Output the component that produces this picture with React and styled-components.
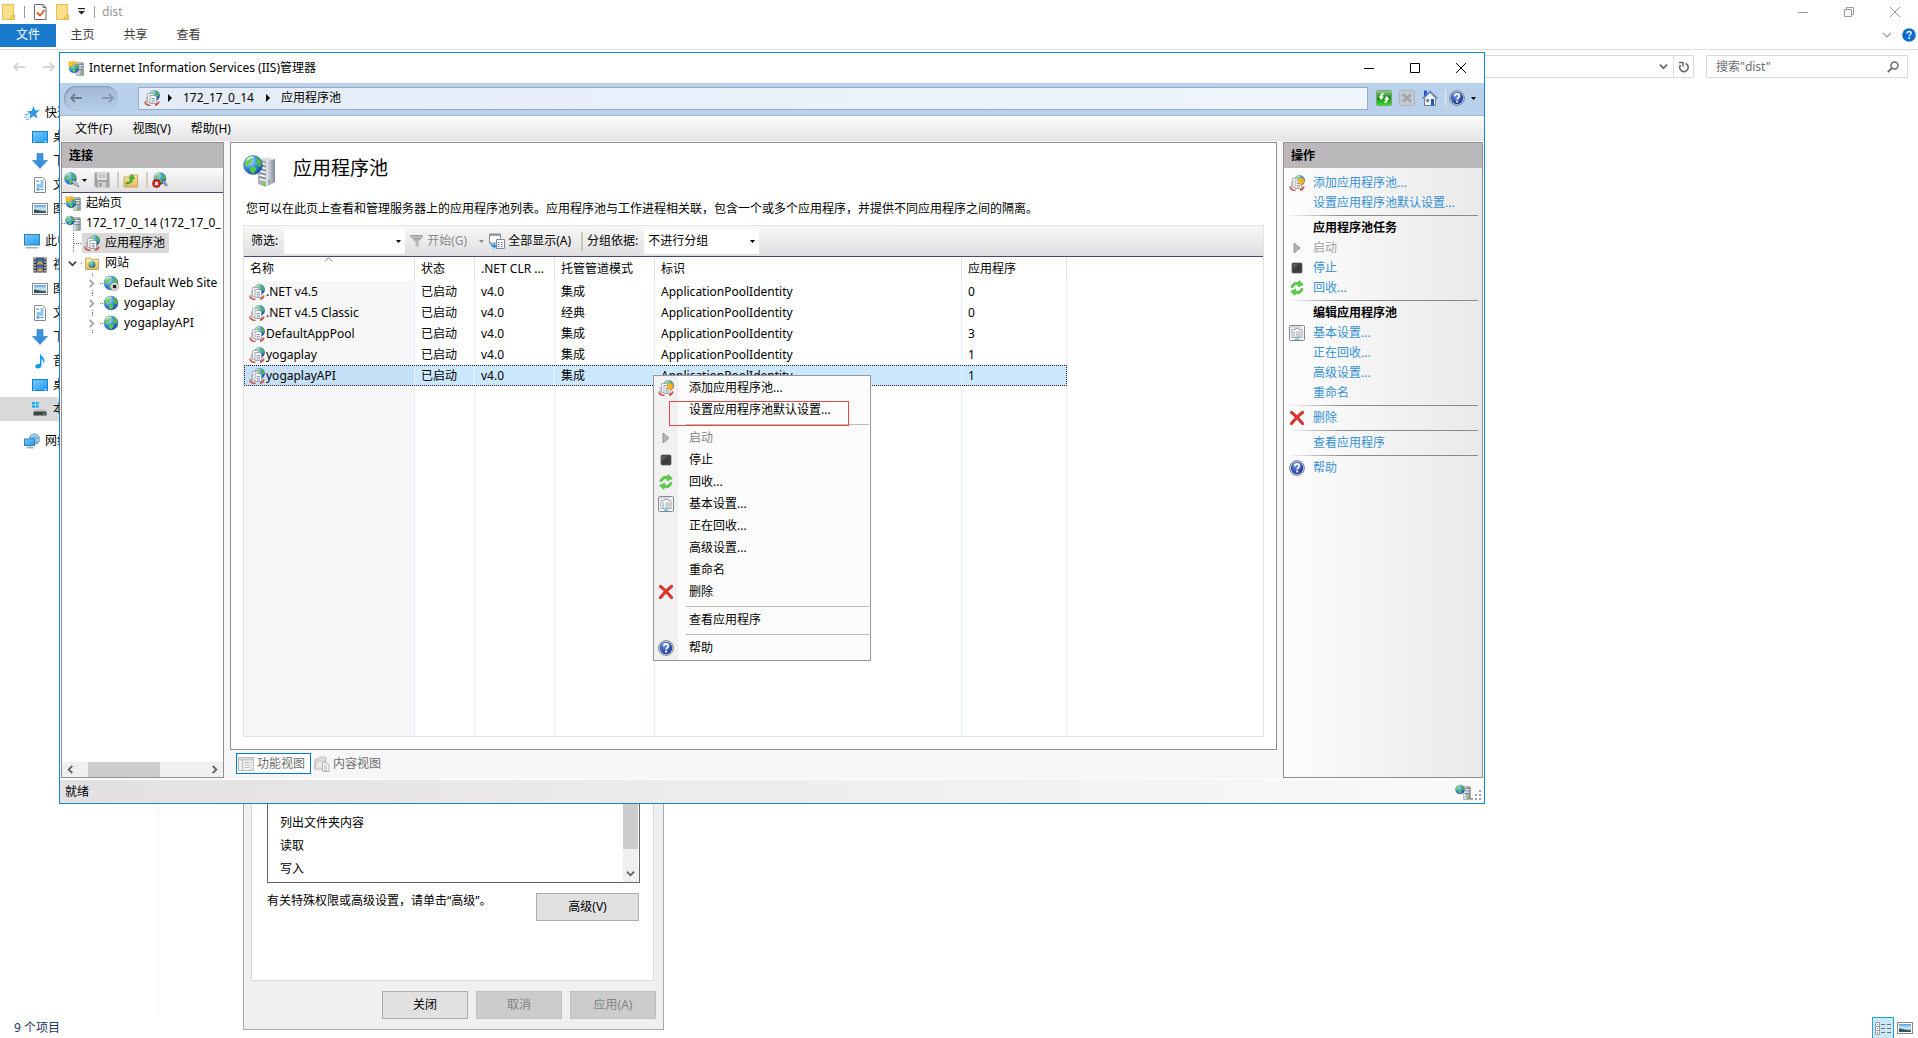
import React from 'react';
import styled, { createGlobalStyle } from 'styled-components';

const GlobalStyle = createGlobalStyle`
  * {
    box-sizing: border-box;
  }
  body {
    margin: 0;
    background: #fff;
    color: #000;
    font-family: 'Noto Sans', 'Noto Sans CJK SC', sans-serif;
    font-size: 12px;
    line-height: 16px;
  }
  button, input, select {
    font: inherit;
    color: inherit;
    margin: 0;
    padding: 0;
    border: 0;
    background: none;
    border-radius: 0;
  }
  a {
    color: inherit;
    text-decoration: none;
  }
  svg {
    display: block;
    flex: none;
  }
  h1, h2, h3, p, ul {
    margin: 0;
    padding: 0;
    list-style: none;
    font-size: inherit;
  }
`;

/* ---------- icons ---------- */

const HiddenSvg = styled.svg`
  position: absolute;
`;

const Defs = () => (
  <HiddenSvg width="0" height="0" aria-hidden="true">
    <defs>
      <radialGradient id="sea" cx="35%" cy="30%" r="75%">
        <stop offset="0" stopColor="#b5e0ff" />
        <stop offset="0.5" stopColor="#3f8fe3" />
        <stop offset="1" stopColor="#15429c" />
      </radialGradient>
      <linearGradient id="tower" x1="0" x2="1" y1="0" y2="0">
        <stop offset="0" stopColor="#e4e9ee" />
        <stop offset="0.5" stopColor="#b4bcc6" />
        <stop offset="1" stopColor="#7d8894" />
      </linearGradient>
      <linearGradient id="screen" x1="0" x2="1" y1="0" y2="1">
        <stop offset="0" stopColor="#7cc8fa" />
        <stop offset="1" stopColor="#1f9df0" />
      </linearGradient>
      <linearGradient id="gold" x1="0" x2="0" y1="0" y2="1">
        <stop offset="0" stopColor="#fbe7a4" />
        <stop offset="1" stopColor="#e3b95c" />
      </linearGradient>
      <radialGradient id="navy" cx="40%" cy="30%" r="75%">
        <stop offset="0" stopColor="#6f93e6" />
        <stop offset="1" stopColor="#122f93" />
      </radialGradient>
      <linearGradient id="green" x1="0" x2="0" y1="0" y2="1">
        <stop offset="0" stopColor="#9ad096" />
        <stop offset="0.5" stopColor="#128a12" />
        <stop offset="1" stopColor="#3fe22c" />
      </linearGradient>
      <linearGradient id="photo" x1="0" x2="0" y1="0" y2="1">
        <stop offset="0" stopColor="#5a9be0" />
        <stop offset="0.5" stopColor="#d6ebfa" />
        <stop offset="1" stopColor="#3a6d86" />
      </linearGradient>
    </defs>
  </HiddenSvg>
);

const Icon = ({ size = 16, children }) => (
  <svg width={size} height={size} viewBox="0 0 16 16" fill="none" aria-hidden="true">
    {children}
  </svg>
);

const GlobeShape = ({ cx = 8, cy = 8, r = 7 }) => (
  <g transform={`translate(${cx} ${cy}) scale(${r / 7})`}>
    <circle r="7" fill="url(#sea)" stroke="#3a70b8" strokeWidth="0.4" />
    <path d="M-5.6-2.6C-4.6-5-2.6-6.300-.4-6.400L.6-5-.8-3.600-1.400-1.400-3.400-.6-4.600 1.200-6.200.8Z" fill="#6bd048" />
    <path d="M2-5.600 4.800-4.400 6.400-1.200 5.600 1.400 3.400.6 2.200-1.600 3-3.400Z" fill="#4dbb37" />
    <path d="M-1.800 1.400 1.400 1.200 2.600 3 1 5.800-.6 6.400-2.200 4Z" fill="#55cc3b" />
    <path d="M-4.600-3.400C-3.400-5-1.600-5.800.4-5.600" stroke="#eefaff" strokeWidth="1.200" opacity="0.800" />
  </g>
);

const TowerShape = () => (
  <g>
    <path d="M8.500 2.500h6l1 1v12h-7z" fill="url(#tower)" stroke="#8b95a0" strokeWidth="0.6" />
    <path d="M9.500 4.500h5M9.500 7h5M9.500 9.500h5" stroke="#6b7683" strokeWidth="0.8" />
    <path d="M9.500 5.500h5M9.500 8h5" stroke="#fff" strokeWidth="0.8" />
    <rect x="12" y="13" width="2" height="1.400" fill="#63d411" />
  </g>
);

const Globe = () => <Icon><GlobeShape /></Icon>;

const Server = () => (
  <Icon>
    <TowerShape />
    <GlobeShape cx={5} cy={5.5} r={4.6} />
  </Icon>
);

const StartPage = () => (
  <Icon>
    <TowerShape />
    <GlobeShape cx={6} cy={8} r={5} />
    <path d="M1 6.500V1l2 1.600C5 1 8 1 9.600 3.600L7.400 5C6.500 3.500 5.400 3.600 4.400 4.300L6 6z" fill="#ffc22e" stroke="#d6921a" strokeWidth="0.5" />
  </Icon>
);

const BigServer = () => (
  <svg width="33" height="33" viewBox="0 0 33 33" fill="none" aria-hidden="true">
    <path d="M16 4 23 6v26l-8-3V6z" fill="#aab2b8" />
    <path d="M23 6 32 4v23l-9 5z" fill="url(#tower)" />
    <path d="M16 4 25 2.500 32 4l-9 2z" fill="#d7dcdf" />
    <path d="M16.500 8l6 1.500M16.500 12l6 1.500M16.500 16l6 1.500M16.500 20l6 1.500M16.500 24l6 1.500" stroke="#f4f6f7" strokeWidth="1.300" />
    <path d="M16.500 10l6 1.500M16.500 14l6 1.500M16.500 18l6 1.500M16.500 22l6 1.500" stroke="#6d767d" strokeWidth="0.900" />
    <path d="M26 25v5" stroke="#7d868d" strokeWidth="1" />
    <rect x="20" y="28" width="3" height="2.500" fill="#6fdc18" />
    <GlobeShape cx={10} cy={10} r={9.5} />
  </svg>
);

const Pool = ({ isNew }) => (
  <Icon>
    <GlobeShape cx={10.5} cy={5.5} r={5.2} />
    <path d="M3.500 3.500h5l1 1v8h-6z" fill="#f4f4f4" stroke="#a5a5a5" strokeWidth="0.8" />
    <path d="M6 5.500h5l1.500 1.500v6.500H6z" fill="#fff" stroke="#90969c" strokeWidth="0.8" />
    <path d="M7.500 8.500h3.500M7.500 10.300h3.500M7.500 12h3.500" stroke="#6484ab" strokeWidth="0.8" />
    <path d="M.8 11.500C1.500 14.500 4 15.500 6.500 15.400" stroke="#cf4a3c" strokeWidth="1.400" />
    <path d="M15 11.500c-.5 2-1.500 3.200-4 3.800" stroke="#cf4a3c" strokeWidth="1.400" />
    <path d="M1 12.500h1.500v-6" stroke="#adadad" strokeWidth="0.8" />
    {isNew && (
      <path d="M12 2l1 2.200 2.300-.7-.9 2.200 1.600 1.500-2.200.7.200 2.200-1.900-1.200-1.700 1.400-.1-2.300-2.100-.6 1.600-1.500-1-2 2.300.4z" fill="#ffb429" stroke="#f59a14" strokeWidth="0.3" />
    )}
  </Icon>
);
const PoolNew = () => <Pool isNew />;

const SitesFolder = () => (
  <Icon>
    <path d="M1.500 3h5l1.500 1.500h6.500v10h-13z" fill="url(#gold)" stroke="#c69a40" strokeWidth="0.8" />
    <path d="M2.500 6.500h11" stroke="#fff3c9" />
    <GlobeShape cx={8} cy={9.5} r={3.3} />
  </Icon>
);

const StoppedSite = () => (
  <Icon>
    <GlobeShape />
    <circle cx="11.500" cy="11.500" r="4" fill="#f4f4f4" stroke="#777" strokeWidth="0.7" />
    <rect x="9.800" y="9.800" width="3.500" height="3.500" fill="#222" />
  </Icon>
);

const Connect = () => (
  <Icon>
    <GlobeShape cx={6.5} cy={6.5} r={6} />
    <path d="M9 9.500l4 3.500" stroke="#7f8c97" strokeWidth="3.600" />
    <path d="M9 9l4 3.500" stroke="#c3ced6" strokeWidth="2" />
    <path d="M13 13l2 2" stroke="#848f98" strokeWidth="1.600" />
  </Icon>
);

const Disconnect = () => (
  <Icon>
    <GlobeShape cx={8} cy={6.5} r={6} />
    <path d="M11 9.500l4 4.500" stroke="#8d99a3" strokeWidth="3" />
    <circle cx="4.500" cy="11.500" r="4" fill="#d21e1e" stroke="#8e0f0f" strokeWidth="0.6" />
    <path d="M3 10l3 3M6 10l-3 3" stroke="#fff" strokeWidth="1.300" />
  </Icon>
);

const Save = () => (
  <Icon>
    <path d="M.5.5h15v15H2l-1.500-1.500z" fill="#a3a3a3" />
    <rect x="3" y="1" width="10" height="7" fill="#dedede" />
    <path d="M4 3h8M4 5h8" stroke="#b5b5b5" />
    <path d="M4 10h8v5.500H4z" fill="#d2d2d2" />
    <path d="M5.500 11h2v3.500h-2z" fill="#8b8b8b" />
  </Icon>
);

const UpFolder = () => (
  <Icon>
    <path d="M1 5h5l1-2h7.500v12H1z" fill="url(#gold)" stroke="#c99f49" strokeWidth="0.9" />
    <path d="M3 10.500c3 0 4.500-1.500 4.600-4H6l3-4 2.800 4H10c0 3.500-2.500 5.500-7 5.500z" fill="#45b82d" stroke="#2a8a19" strokeWidth="0.5" />
  </Icon>
);

const Funnel = () => (
  <Icon>
    <path d="M1 2h13v2L9.500 9v5.500l-3-2V9L1 4z" fill="#b9b9b9" />
    <path d="M2 2.500h11M5 6h6" stroke="#9b9b9b" />
  </Icon>
);

const ShowAll = () => (
  <Icon>
    <path d="M.5 1h11v9H.5z" fill="#fff" stroke="#85898f" />
    <path d="M.5 2h11" stroke="#85898f" strokeWidth="1.500" />
    <path d="M7.500 6.500h8v9h-8z" fill="#fff" stroke="#85898f" />
    <path d="M9 9.500h1.500M12 9.500h1.500M9 11.500h1.500M12 11.500h1.500M9 13.500h1.500M12 13.500h1.500" stroke="#5b79b8" strokeWidth="1.200" />
    <path d="M1.500 8c0 2.500 1 4 3 4v-2l3.500 3.300L4.500 16v-2C2 14 .8 11.500 1.500 8z" fill="#2796dd" />
  </Icon>
);

const Play = () => <Icon><path d="M5 3l6 5-6 5z" fill="#b3b3b3" stroke="#8f8f8f" strokeWidth="0.9" /></Icon>;

const Stop = () => (
  <Icon>
    <rect x="3" y="3" width="10" height="10" rx="1" fill="#3d3d3d" stroke="#666" strokeWidth="0.8" />
    <path d="M4 9L9 4H4z" fill="#5d5d5d" />
  </Icon>
);

const Recycle = () => (
  <Icon>
    <path d="M2 7.500C2.500 3.500 6 1.500 9.500 2.500L10.200.5 14.300 4.600 9.300 7 9.300 5C7 4.200 4.800 5 4 7.500z" fill="#5bd046" stroke="#3aa52b" strokeWidth="0.5" />
    <path d="M14 8.500c-.5 4-4 6-7.500 5L5.800 15.500 1.700 11.400 6.700 9 6.700 11c2.300.8 4.500 0 5.300-2.500z" fill="#5bd046" stroke="#3aa52b" strokeWidth="0.5" />
  </Icon>
);

const Settings = () => (
  <Icon>
    <rect x="0.5" y="0.5" width="15" height="15" rx="1" fill="#f4f5f6" stroke="#85898f" />
    <path d="M1 2h11" stroke="#b9bec3" />
    <path d="M3 4.500h3.500v-1h3.500v1h3v8H3z" fill="#fff" stroke="#8f969d" strokeWidth="0.8" />
    <path d="M4.500 7h1.500M4.500 9h1.500M4.500 11h1.500" stroke="#5d8fc0" strokeWidth="1.200" />
    <path d="M7 7h5M7 9h5M7 11h5" stroke="#9ba1a7" />
    <path d="M6 14.200h4" stroke="#1cc3f2" strokeWidth="1.200" />
  </Icon>
);

const Delete = () => (
  <Icon>
    <path d="M2.500 2.500C6 5 10 9.500 13.500 13.500M13.500 2.500C10 5 5.500 10 2.500 13.500" stroke="#b04a44" strokeWidth="3.200" strokeLinecap="round" />
    <path d="M2.500 2.500C6 5 10 9.500 13.500 13.500M13.500 2.500C10 5 5.500 10 2.500 13.500" stroke="#e8322c" strokeWidth="2.200" strokeLinecap="round" />
  </Icon>
);

const QuestionMark = ({ w = 1.8 }) => (
  <g>
    <path d="M5.700 6.200C5.800 4.500 7 4 8.100 4c1.300 0 2.300.8 2.300 2 0 1.700-2.200 1.700-2.200 3.400" stroke="#fff" strokeWidth={w} />
    <rect x="7.200" y="10.600" width="2" height="1.900" fill="#fff" />
  </g>
);

const Help = () => (
  <Icon>
    <circle cx="8" cy="8" r="7.400" fill="#d8dce4" stroke="#6d7480" strokeWidth="0.9" />
    <circle cx="8" cy="8" r="6.200" fill="url(#navy)" />
    <QuestionMark />
  </Icon>
);

const HelpFlat = () => (
  <Icon size={14}>
    <circle cx="8" cy="8" r="7.800" fill="#0a6cce" />
    <QuestionMark w={1.6} />
  </Icon>
);

const RefreshGreen = () => (
  <Icon>
    <rect x="0.5" y="0.5" width="15" height="15" rx="1" fill="url(#green)" stroke="#7ba578" />
    <path d="M7.500 3C5.500 3 4.200 4.200 4.200 6.500H2.500l2.800 3.500L8 6.500H6.300c0-1 .4-1.500 1.200-1.500z" fill="#fff" />
    <path d="M8.500 13c2 0 3.300-1.200 3.300-3.500h1.700L10.700 6 8 9.500h1.700c0 1-.4 1.500-1.200 1.500z" fill="#fff" />
  </Icon>
);

const StopGrey = () => (
  <Icon>
    <rect x="0.5" y="0.5" width="15" height="15" rx="1" fill="#c3c9d0" stroke="#adb4bc" />
    <path d="M4 4.500l8 7M12 4.500l-8 7" stroke="#9ca3ab" strokeWidth="2.400" />
  </Icon>
);

const Home = () => (
  <Icon>
    <path d="M2 .5h3v5.500H2z" fill="#2a50d8" />
    <path d="M2.500 8L8 2.500 13.500 8v7.500h-11z" fill="#eef3f9" stroke="#54657d" strokeWidth="0.8" />
    <path d="M.5 8.500L8 1.300l7.500 7.200" stroke="#5f7fae" strokeWidth="1.300" />
    <rect x="4.200" y="9" width="3" height="3" fill="#7d8894" />
    <rect x="9" y="9" width="3" height="6.500" fill="#2554a8" />
  </Icon>
);

const FeatureView = () => (
  <Icon>
    <rect x="0.5" y="1.500" width="15" height="13" fill="#f2f2f2" stroke="#bdbdbd" />
    <path d="M1 3.500h14" stroke="#c9c9c9" strokeWidth="2" />
    <path d="M4.500 5v9.500M6.500 6.500h5M6.500 9h5M6.500 11.500h5" stroke="#bcbcbc" strokeWidth="1.200" />
    <path d="M13 5v9" stroke="#d3d3d3" />
  </Icon>
);

const ContentView = () => (
  <Icon>
    <path d="M1 3h4l1-2h6v9l-2 3H.5z" fill="#dcdcdc" stroke="#c0c0c0" />
    <path d="M3 5h8l-2 8H1z" fill="#e9e9e9" stroke="#c4c4c4" />
    <path d="M8.500 6.500h4l2.500 2.500v6.500H8.500z" fill="#f5f5f5" stroke="#b2b2b2" />
    <path d="M10 10h3M10 12h3M10 14h3" stroke="#b5b5b5" />
  </Icon>
);

const FolderTall = () => (
  <svg width="13" height="16" viewBox="0 0 13 16" aria-hidden="true">
    <path d="M.5.5h11v15H.5z" fill="#fbe08a" stroke="#e5bf56" />
    <path d="M10.500 11h2v4.500h-5z" fill="#f6d26a" stroke="#e0b64b" />
  </svg>
);

const CheckDoc = () => (
  <svg width="13" height="16" viewBox="0 0 13 16" fill="none" aria-hidden="true">
    <path d="M.5.5h8.500l3 3v12H.5z" fill="#fff" stroke="#6b6b6b" />
    <path d="M9 .5v3h3" stroke="#6b6b6b" />
    <path d="M3 8.500l3 3 4.500-5.500" stroke="#e2561c" strokeWidth="1.800" />
  </svg>
);

const CustomizeCaret = () => (
  <svg width="7" height="7" viewBox="0 0 7 7" aria-hidden="true">
    <path d="M0 0h7v1.300H0zM0 3h7L3.500 6.500z" fill="#222" />
  </svg>
);

const Caret = ({ color = '#000' }) => (
  <svg width="5" height="3" viewBox="0 0 5 3" aria-hidden="true">
    <path d="M0 0h5L2.500 3z" fill={color} />
  </svg>
);

const Crumb = () => (
  <svg width="4" height="8" viewBox="0 0 4 8" aria-hidden="true">
    <path d="M0 0l4 4-4 4z" fill="#000" />
  </svg>
);

const Chevron = ({ dir = 'down', color = '#606060', size = 9, weight = 2 }) => {
  const turn = { down: 0, left: 90, up: 180, right: 270 }[dir];
  return (
    <svg width={size} height={size} viewBox="0 0 10 10" fill="none" aria-hidden="true">
      <path d="M1 3l4 4 4-4" stroke={color} strokeWidth={weight} transform={`rotate(${turn} 5 5)`} />
    </svg>
  );
};

const Arrow = ({ flip, color }) => (
  <svg width="12" height="10" viewBox="0 0 12 10" fill="none" aria-hidden="true">
    <path
      d="M12 5H1M5 1L1 5l4 4"
      stroke={color}
      strokeWidth="1.800"
      transform={flip ? 'rotate(180 6 5)' : undefined}
    />
  </svg>
);

const WinMin = () => <svg width="10" height="10" viewBox="0 0 10 10"><path d="M0 5h10v1H0z" fill="currentColor" /></svg>;
const WinMax = () => <svg width="10" height="10" viewBox="0 0 10 10" fill="none"><path d="M.5.5h9v9h-9z" stroke="currentColor" /></svg>;
const WinRestore = () => (
  <svg width="10" height="10" viewBox="0 0 10 10" fill="none">
    <path d="M.5 2.500h7v7h-7zM2.500 2.500v-2h7v7h-2" stroke="currentColor" />
  </svg>
);
const WinClose = () => <svg width="10" height="10" viewBox="0 0 10 10"><path d="M0 0l10 10M10 0L0 10" stroke="currentColor" /></svg>;

const Magnifier = () => (
  <svg width="12" height="12" viewBox="0 0 12 12" fill="none" aria-hidden="true">
    <circle cx="7.500" cy="4.500" r="3.500" stroke="#6a6a6a" strokeWidth="1.500" />
    <path d="M5 7L.8 11.200" stroke="#6a6a6a" strokeWidth="1.800" />
  </svg>
);

const Reload = () => (
  <svg width="11" height="12" viewBox="0 0 11 12" fill="none" aria-hidden="true">
    <path d="M7.500 2.500A4.200 4.200 0 1 1 2.500 4" stroke="#6a6a6a" strokeWidth="1.600" />
    <path d="M1 1.500h4v4" stroke="#6a6a6a" strokeWidth="1.500" />
  </svg>
);

const QuickStar = () => (
  <Icon>
    <path d="M9.500 1l1.600 4.500 4.600-.4-3.700 3.400 1.600 5-4.300-2.700-3.800 3.400.8-4.900L3 6.200l4.600-.3z" fill="#2f97e3" />
    <path d="M.5 9.500h4M0 12h4.500M2 14.500h3" stroke="#6bb7ec" strokeWidth="1" />
  </Icon>
);

const Desktop = () => (
  <Icon>
    <rect x="0.5" y="2.500" width="15" height="11" fill="url(#screen)" stroke="#0f7fd0" />
    <path d="M1.500 13h1.500M12 13h3" stroke="#fff" strokeWidth="0.8" />
  </Icon>
);

const Download = () => <Icon><path d="M5 .5h6v7h4.500L8 15.500.5 7.500H5z" fill="#3b91dc" stroke="#2f7fc6" strokeWidth="0.6" /></Icon>;

const Doc = () => (
  <Icon>
    <path d="M2.500.5h8l3 3v12h-11z" fill="#fff" stroke="#8a8a8a" />
    <path d="M4.500 5l1-2 1 2M8.500 4h3M8.500 6h3M4.500 8h7M4.500 10h7M8.500 12.500h3" stroke="#2d8fdd" />
    <path d="M4.500 11.500h3v2h-3z" fill="#2d8fdd" />
  </Icon>
);

const Picture = () => (
  <Icon>
    <rect x="0.5" y="2.500" width="15" height="11" fill="#fff" stroke="#8a8a8a" />
    <rect x="2" y="4" width="12" height="8" fill="url(#photo)" />
    <path d="M2 8.500c3 0 5 1.500 12 2V12H2z" fill="#2e5a52" />
  </Icon>
);

const Computer = () => (
  <Icon>
    <rect x="0.5" y="1.500" width="15" height="10.500" fill="url(#screen)" stroke="#3a7ea8" />
    <path d="M1.500 14.800h13" stroke="#8aa0ad" strokeWidth="1.200" />
  </Icon>
);

const Video = () => (
  <Icon>
    <rect x="1.500" y="0.5" width="13" height="15" fill="#3a3a3a" />
    <rect x="4.500" y="1.500" width="7" height="6" fill="#3467c2" />
    <rect x="4.500" y="8.500" width="7" height="6" fill="#4b72b8" />
    <path d="M4.500 7.500l3.500-4 3.500 4zM4.500 14.500l3.500-4 3.500 4z" fill="#d8a23e" />
    <path d="M3 1v14M13 1v14" stroke="#fff" strokeWidth="1.200" strokeDasharray="1.500 1.500" />
  </Icon>
);

const Music = () => (
  <Icon>
    <path d="M8 0c.5 3 4.500 4 4.500 7.500 0 1.500-.5 2.500-1 3 .2-2.500-1-4-2-4.500v6.500c0 1.800-1.700 3-3.700 3-1.500 0-2.600-.8-2.600-2C3.200 12 5 10.600 8 10.800z" fill="#149aec" />
  </Icon>
);

const Disk = () => (
  <Icon>
    <path d="M0 1h3v2.500H0zM3.700 1h3v2.500h-3zM0 4.200h3v2.500H0zM3.700 4.200h3v2.500h-3z" fill="#18b4f0" />
    <path d="M3 8.500h10l1.500 2h-13z" fill="#b9bcbe" />
    <rect x="1.500" y="10.500" width="13" height="4" fill="#3d4245" />
    <rect x="11.500" y="12" width="1.500" height="1.200" fill="#4bdc3b" />
  </Icon>
);

const Network = () => (
  <Icon>
    <circle cx="10.500" cy="6" r="5.300" fill="#7fb6d8" stroke="#5f93b6" strokeWidth="0.6" />
    <path d="M7 4c2-2 5-2 7.500 0M6 7h9.500" stroke="#d5ebf7" strokeWidth="0.8" />
    <rect x="0.5" y="6" width="10" height="6.500" fill="url(#screen)" stroke="#3381b5" />
    <path d="M2.500 14.800h7M6 13v1.500" stroke="#6f93a8" />
  </Icon>
);

const DetailsView = () => (
  <svg width="16" height="13" viewBox="0 0 16 13" fill="none" aria-hidden="true">
    <path d="M.5.5h4v12h-4zM.5 4.500h4M.5 8.500h4" fill="#fff" stroke="#9a9a9a" />
    <path d="M6 2.500h4M12 2.500h4M6 6.500h4M12 6.500h4M6 10.500h4M12 10.500h4" stroke="#6d6d6d" />
    <path d="M2 2.500h1M2 6.500h1" stroke="#3b86cc" />
    <path d="M2 10.500h1" stroke="#d03030" />
  </svg>
);

/* ---------- explorer window ---------- */

const Screen = styled.div`
  position: relative;
  min-height: 100vh;
  overflow: hidden;
`;

const Explorer = styled.section`
  min-height: 100vh;
  display: flex;
  flex-direction: column;
`;

const ExplorerTitle = styled.header`
  display: flex;
  align-items: center;
  height: 23px;
  padding-left: 2px;
  color: #999;
  .tools {
    display: flex;
    align-items: center;
    gap: 9px;
  }
  .bar {
    width: 1px;
    height: 12px;
    background: #999;
  }
  h2 {
    flex: 1;
    margin-left: 7px;
    font-weight: 400;
  }
`;

const WinButtons = styled.div`
  display: flex;
  align-self: stretch;
  button {
    width: 46px;
    display: flex;
    align-items: center;
    justify-content: center;
  }
`;

const Ribbon = styled.nav`
  display: flex;
  align-items: center;
  height: 27px;
  padding: 0 2px 2px 0;
  border-bottom: 1px solid #dadbdc;
  color: #3c3c3c;
  .spacer {
    flex: 1;
  }
  .help {
    margin-left: 10px;
  }
`;

const RibbonTab = styled.button`
  width: ${p => (p.$file ? 56 : 53)}px;
  height: 23px;
  background: ${p => (p.$file ? '#1979ca' : 'none')};
  color: ${p => (p.$file ? '#fff' : '#3c3c3c')};
`;

const AddressRow = styled.div`
  display: flex;
  gap: 12px;
  padding: 5px 10px 5px 13px;
  .arrows {
    display: flex;
    align-items: center;
    gap: 18px;
  }
`;

const Field = styled.label`
  display: flex;
  align-items: center;
  flex: ${p => (p.$grow ? 1 : 'none')};
  width: ${p => (p.$grow ? 'auto' : '202px')};
  height: 23px;
  border: 1px solid #d9d9d9;
  padding-left: 9px;
  padding-right: ${p => (p.$grow ? 0 : 8)}px;
  input {
    flex: 1;
    min-width: 0;
    outline: none;
    color: #6d6d6d;
  }
  input::placeholder {
    color: #6d6d6d;
    opacity: 1;
  }
  .reload {
    display: flex;
    align-items: center;
    justify-content: center;
    align-self: stretch;
    width: 20px;
    margin-left: 5px;
    border-left: 1px solid #d9d9d9;
  }
`;

const SideNav = styled.nav`
  flex: 1;
  width: 159px;
  padding-top: 18px;
  border-right: 1px solid #f2f2f2;
  ul + ul {
    margin-top: 8px;
  }
`;

const SideLink = styled.a`
  display: flex;
  align-items: center;
  gap: 5px;
  height: 24px;
  padding-left: ${p => (p.$root ? 24 : 32)}px;
  background: ${p => (p.$active ? '#d9d9d9' : 'none')};
`;

const ExplorerStatus = styled.footer`
  display: flex;
  align-items: center;
  height: 21px;
  padding-left: 14px;
  padding-right: 5px;
  color: #1e395b;
  .views {
    margin-left: auto;
    display: flex;
    align-items: center;
    gap: 3px;
  }
  .views button {
    display: flex;
    align-items: center;
    justify-content: center;
    height: 21px;
  }
  .views .on {
    width: 22px;
    background: #cbe8f6;
    border: 1px solid #26a0da;
    border-bottom: 0;
  }
`;

const sideGroups = [
  [['快速访问', QuickStar, true], ['桌面', Desktop], ['下载', Download], ['文档', Doc], ['图片', Picture]],
  [
    ['此电脑', Computer, true],
    ['视频', Video],
    ['图片', Picture],
    ['文档', Doc],
    ['下载', Download],
    ['音乐', Music],
    ['桌面', Desktop],
    ['本地磁盘 (C:)', Disk],
  ],
  [['网络', Network, true]],
];

function ExplorerWindow() {
  return (
    <Explorer>
      <ExplorerTitle>
        <div className="tools">
          <FolderTall />
          <span className="bar" />
          <CheckDoc />
          <FolderTall />
          <CustomizeCaret />
          <span className="bar" />
        </div>
        <h2>dist</h2>
        <WinButtons>
          <button aria-label="最小化"><WinMin /></button>
          <button aria-label="还原"><WinRestore /></button>
          <button aria-label="关闭"><WinClose /></button>
        </WinButtons>
      </ExplorerTitle>
      <Ribbon>
        <RibbonTab $file>文件</RibbonTab>
        <RibbonTab>主页</RibbonTab>
        <RibbonTab>共享</RibbonTab>
        <RibbonTab>查看</RibbonTab>
        <span className="spacer" />
        <button aria-label="展开功能区"><Chevron color="#999" size={10} weight={1.2} /></button>
        <button className="help" aria-label="帮助"><HelpFlat /></button>
      </Ribbon>
      <AddressRow>
        <div className="arrows">
          <button aria-label="后退"><Arrow color="#d5d5d5" /></button>
          <button aria-label="前进"><Arrow color="#d5d5d5" flip /></button>
        </div>
        <Field $grow>
          <input aria-label="地址" />
          <Chevron color="#6a6a6a" />
          <button className="reload" aria-label="刷新"><Reload /></button>
        </Field>
        <Field>
          <input type="search" aria-label="搜索" placeholder={'搜索"dist"'} />
          <Magnifier />
        </Field>
      </AddressRow>
      <SideNav>
        {sideGroups.map((group, i) => (
          <ul key={i}>
            {group.map(([label, Glyph, root]) => (
              <li key={label}>
                <SideLink href="#" $root={root} $active={Glyph === Disk}>
                  <Glyph />
                  {label}
                </SideLink>
              </li>
            ))}
          </ul>
        ))}
      </SideNav>
      <ExplorerStatus>
        9 个项目
        <div className="views">
          <button className="on" aria-label="详细信息"><DetailsView /></button>
          <button aria-label="大缩略图"><Picture /></button>
        </div>
      </ExplorerStatus>
    </Explorer>
  );
}

/* ---------- permissions dialog ---------- */

const Dialog = styled.section`
  position: absolute;
  left: 243px;
  top: 780px;
  width: 421px;
  padding: 0 7px 10px;
  border: 1px solid #aaa;
  background: #f0f0f0;
`;

const DialogPage = styled.div`
  margin-right: 2px;
  border: 1px solid #dcdcdc;
  background: #fff;
  padding: 0 13px 59px 15px;
`;

const PermissionList = styled.div`
  display: flex;
  justify-content: space-between;
  border: 1px solid #646464;
  ul {
    padding: 28px 0 2px 12px;
  }
  li {
    height: 23px;
    line-height: 23px;
  }
`;

const VScroll = styled.div`
  width: 16px;
  border-right: 1px solid #fff;
  background: #f0f0f0;
  display: flex;
  flex-direction: column;
  justify-content: space-between;
  align-items: center;
  padding-bottom: 4px;
  .thumb {
    width: 100%;
    height: 66px;
    background: #cdcdcd;
  }
`;

const Advanced = styled.div`
  display: flex;
  justify-content: space-between;
  padding: 10px 1px 0 0;
`;

const DialogButton = styled.button`
  width: ${p => (p.$wide ? 103 : 86)}px;
  height: 28px;
  border: 1px solid #adadad;
  background: #e1e1e1;
  &:disabled {
    border-color: #bfbfbf;
    background: #ccc;
    color: #838383;
  }
`;

const DialogFooter = styled.div`
  display: flex;
  justify-content: flex-end;
  gap: 8px;
  padding-top: 10px;
`;

function PermissionsDialog() {
  return (
    <Dialog>
      <DialogPage>
        <PermissionList>
          <ul>
            <li>列出文件夹内容</li>
            <li>读取</li>
            <li>写入</li>
          </ul>
          <VScroll>
            <div className="thumb" />
            <Chevron />
          </VScroll>
        </PermissionList>
        <Advanced>
          <p>有关特殊权限或高级设置，请单击“高级”。</p>
          <DialogButton $wide>高级(V)</DialogButton>
        </Advanced>
      </DialogPage>
      <DialogFooter>
        <DialogButton>关闭</DialogButton>
        <DialogButton disabled>取消</DialogButton>
        <DialogButton disabled>应用(A)</DialogButton>
      </DialogFooter>
    </Dialog>
  );
}

/* ---------- IIS manager window ---------- */

const Manager = styled.main`
  position: absolute;
  left: 59px;
  right: 433px;
  top: 52px;
  bottom: 234px;
  display: flex;
  flex-direction: column;
  border: 1px solid #1883d7;
  background: #f7f7f7;
`;

const ManagerTitle = styled.header`
  display: flex;
  align-items: center;
  height: 30px;
  padding-left: 8px;
  gap: 5px;
  background: #fff;
  h1 {
    flex: 1;
    font-weight: 400;
  }
`;

const NavBand = styled.div`
  display: flex;
  align-items: center;
  height: 33px;
  padding: 0 8px 2px 4px;
  background: #b9d1ea;
  border-bottom: 1px solid #a3b8cf;
`;

const BackForward = styled.div`
  display: flex;
  align-items: center;
  justify-content: space-between;
  width: 54px;
  height: 25px;
  padding: 0 4px 0 6px;
  margin-right: 20px;
  border-radius: 12px;
  background: linear-gradient(#a3bad4, #b5cce6);
  box-shadow: inset 1px 1px 2px #7f98b3;
`;

const Breadcrumb = styled.div`
  flex: 1;
  display: flex;
  align-items: center;
  height: 23px;
  padding-left: 5px;
  gap: 8px;
  border: 1px solid #97acc4;
  background: linear-gradient(90deg, #e3ecf7, #f0f5fb);
  a {
    padding: 0 4px 0 3px;
  }
`;

const NavTools = styled.div`
  display: flex;
  align-items: center;
  gap: 7px;
  margin-left: 8px;
  .split {
    display: flex;
    align-items: center;
    gap: 6px;
    padding-left: 3px;
    border-left: 1px solid #e6eef7;
  }
`;

const MenuBar = styled.nav`
  display: flex;
  align-items: center;
  gap: 20px;
  height: 25px;
  padding-left: 15px;
  background: linear-gradient(#fcfcfc, #e5e3e5);
`;

const Columns = styled.div`
  flex: 1;
  display: flex;
  min-height: 0;
  padding: 1px;
`;

const Panel = styled.section`
  display: flex;
  flex-direction: column;
  width: ${p => p.$width}px;
  border: 1px solid #929092;
  background: ${p => (p.$shaded ? 'linear-gradient(90deg, #fdfdfd, #e9e9e9)' : '#fff')};
  overflow: hidden;
`;

const PanelTitle = styled.h2`
  height: 25px;
  line-height: 26px;
  padding-left: 7px;
  background: #bbb8bb;
  font-weight: 700;
`;

const ConnToolbar = styled.div`
  display: flex;
  align-items: center;
  height: 25px;
  padding-left: 2px;
  border-bottom: 1px solid #494674;
  background: linear-gradient(#fbfbfb, #e2e0e2);
  button {
    display: flex;
    align-items: center;
    gap: 2px;
  }
  .save {
    margin-left: 7px;
  }
  .sep {
    width: 2px;
    height: 16px;
    margin: 0 4px 0 7px;
    background: #cfcdbb;
  }
`;

const Tree = styled.ul`
  flex: 1;
  overflow: hidden;
`;

const TreeRow = styled.li`
  display: flex;
  align-items: center;
  height: 20px;
  white-space: nowrap;
`;

const TreeNode = styled.button`
  display: flex;
  align-items: center;
  gap: 5px;
  height: 20px;
  padding: 0 4px 0 ${p => (p.$level === 1 ? 2 : 0)}px;
  background: ${p => (p.$active ? '#d9d9d9' : 'none')};
`;

const Expander = styled.button`
  display: flex;
  justify-content: center;
  width: 15px;
  margin-left: ${p => (p.$level === 1 ? -17 : -19)}px;
  margin-right: ${p => (p.$level === 1 ? 2 : 4)}px;
`;

const HScroll = styled.div`
  display: flex;
  align-items: center;
  height: 15px;
  padding: 0 4px;
  background: #f0f0f0;
  .thumb {
    width: 72px;
    height: 15px;
    margin-left: 13px;
    background: #cdcdcd;
  }
  .end {
    margin-left: auto;
  }
`;

const Center = styled.div`
  flex: 1;
  min-width: 0;
  display: flex;
  flex-direction: column;
  margin: 0 6px;
`;

const Feature = styled.section`
  flex: 1;
  display: flex;
  flex-direction: column;
  padding: 12px;
  border: 1px solid #929092;
  background: #fff;
`;

const FeatureHead = styled.div`
  display: flex;
  align-items: center;
  gap: 17px;
  height: 33px;
  h2 {
    font-size: 19px;
    line-height: 28px;
    font-weight: 400;
    padding-bottom: 7px;
  }
`;

const Intro = styled.p`
  padding: 13px 3px 8px;
`;

const ListFrame = styled.div`
  flex: 1;
  display: flex;
  flex-direction: column;
  border: 1px solid #e3e3e3;
`;

const FilterBar = styled.div`
  display: flex;
  align-items: center;
  height: 31px;
  padding-left: 7px;
  white-space: nowrap;
  background: linear-gradient(#f8f8f8, #e0dee0);
  border-bottom: 1px solid #494674;
  button {
    display: flex;
    align-items: center;
    gap: 3px;
  }
  .go {
    color: #8a8a8a;
    gap: 2px;
  }
  .caret {
    padding: 4px 5px 4px 12px;
  }
  .sep {
    width: 2px;
    height: 19px;
    margin: 0 4px 0 10px;
    background: #c9c7b5;
  }
`;

const Combo = styled.div`
  position: relative;
  width: ${p => p.$width}px;
  height: 25px;
  margin: 0 4px 0 6px;
  background: #fff;
  input, select {
    width: 100%;
    height: 100%;
    padding-left: 4px;
    appearance: none;
    outline: none;
  }
  svg {
    position: absolute;
    right: 4px;
    top: 11px;
    pointer-events: none;
  }
`;

const PoolTable = styled.table`
  flex: 1;
  display: flex;
  flex-direction: column;
  thead, tbody {
    display: flex;
    flex-direction: column;
  }
  tbody {
    flex: 1;
  }
`;

const Row = styled.tr`
  display: grid;
  grid-template-columns: 171px 60px 80px 100px 307px 105px;
  height: ${p => (p.$head ? 24 : 21)}px;
  flex: ${p => (p.$fill ? '1' : 'none')};
  width: 823px;
  outline: ${p => (p.$active ? '1px dotted #222' : 'none')};
  outline-offset: -1px;
  th, td {
    display: flex;
    align-items: center;
    padding: 0 4px 0 6px;
    font-weight: 400;
    text-align: left;
    white-space: nowrap;
    border-right: 1px solid ${p => (p.$head ? '#e3e3e3' : '#e6f1fb')};
    background: ${p => (p.$active ? '#cce8ff' : 'none')};
  }
  th:first-child {
    position: relative;
  }
  th:first-child svg {
    position: absolute;
    left: 80px;
    top: -2px;
  }
  td:first-child {
    gap: 1px;
    padding-left: 5px;
    background: ${p => (p.$active ? '#c5e0f7' : '#f7f7f7')};
  }
`;

const ViewTabs = styled.div`
  display: flex;
  gap: 1px;
  height: 28px;
  padding: 3px 6px 4px;
`;

const ViewTab = styled.button`
  display: flex;
  align-items: center;
  gap: 3px;
  padding: 0 5px 0 1px;
  border: 1px solid ${p => (p.$active ? '#0078d7' : 'transparent')};
  background: ${p => (p.$active ? '#fff' : 'none')};
  color: #6d6d6d;
`;

const ActionList = styled.div`
  padding: 5px 4px 0 3px;
`;

const ActionItem = styled.div`
  display: flex;
  align-items: center;
  height: 20px;
  padding-left: 2px;
  .icon {
    width: 24px;
  }
  a {
    color: #3590d3;
  }
  button {
    color: #a0a0a0;
  }
  h3 {
    font-weight: 700;
  }
`;

const ActionRule = styled.hr`
  height: 1px;
  margin: 2px 0;
  border: 0;
  background: linear-gradient(90deg, rgba(138, 138, 138, 0), #8a8a8a 30%);
`;

const StatusBar = styled.footer`
  display: flex;
  align-items: center;
  justify-content: space-between;
  height: 24px;
  padding: 0 3px 0 5px;
  border-top: 1px solid #fff;
  background: linear-gradient(90deg, #e2e0e2, #fafafa);
  .right {
    display: flex;
    align-items: flex-end;
  }
`;

const pools = [
  ['.NET v4.5', '集成', 0],
  ['.NET v4.5 Classic', '经典', 0],
  ['DefaultAppPool', '集成', 3],
  ['yogaplay', '集成', 1],
  ['yogaplayAPI', '集成', 1],
];

const tree = [
  { label: '起始页', level: 0, Glyph: StartPage },
  { label: '172_17_0_14 (172_17_0_', level: 0, Glyph: Server },
  { label: '应用程序池', level: 1, Glyph: Pool, active: true },
  { label: '网站', level: 1, Glyph: SitesFolder, open: true },
  { label: 'Default Web Site', level: 2, Glyph: StoppedSite },
  { label: 'yogaplay', level: 2, Glyph: Globe },
  { label: 'yogaplayAPI', level: 2, Glyph: Globe },
];

const actions = [
  { label: '添加应用程序池...', Glyph: PoolNew },
  { label: '设置应用程序池默认设置...' },
  null,
  { label: '应用程序池任务', head: true },
  { label: '启动', Glyph: Play, off: true },
  { label: '停止', Glyph: Stop },
  { label: '回收...', Glyph: Recycle },
  null,
  { label: '编辑应用程序池', head: true },
  { label: '基本设置...', Glyph: Settings },
  { label: '正在回收...' },
  { label: '高级设置...' },
  { label: '重命名' },
  null,
  { label: '删除', Glyph: Delete },
  null,
  { label: '查看应用程序' },
  null,
  { label: '帮助', Glyph: Help },
];

// the context menu keeps the pool commands in one block, without headings
const menuItems = [
  ...actions.slice(0, 3),
  ...actions.slice(4, 15).filter(item => item && !item.head),
  ...actions.slice(15),
];

// dotted connector lines in front of a tree node
const guides = [
  { width: 3, open: 'M0 10.5h3', leaf: 'M0 10.5h3' },
  { width: 20, open: 'M19 10.5h3', leaf: 'M11.500 0v20M12 10.5h8' },
  { width: 41, open: 'M38 10.5h3M30.5 0v3M30.5 17v3', leaf: 'M38 10.5h3M30.5 0v3M30.5 17v3' },
];

const Guide = ({ level, open }) => {
  const { width, ...paths } = guides[level];
  return (
    <svg width={width} height="20" viewBox={`0 0 ${width} 20`} fill="none" aria-hidden="true">
      <path d={open ? paths.open : paths.leaf} stroke="#777" strokeDasharray="1 1" />
    </svg>
  );
};

function Connections() {
  return (
    <Panel $width={163}>
      <PanelTitle>连接</PanelTitle>
      <ConnToolbar>
        <button aria-label="创建新连接"><Connect /><Caret /></button>
        <button className="save" aria-label="保存连接"><Save /></button>
        <span className="sep" />
        <button aria-label="向上"><UpFolder /></button>
        <span className="sep" />
        <button aria-label="删除连接"><Disconnect /></button>
      </ConnToolbar>
      <Tree>
        {tree.map(({ label, level, Glyph, active, open }) => (
          <TreeRow key={label}>
            <Guide level={level} open={open} />
            {open && (
              <Expander $level={level} aria-label="折叠"><Chevron color="#404040" /></Expander>
            )}
            {level === 2 && (
              <Expander $level={level} aria-label="展开"><Chevron dir="right" color="#a6a6a6" /></Expander>
            )}
            <TreeNode $level={level} $active={active}>
              <Glyph />
              {label}
            </TreeNode>
          </TreeRow>
        ))}
      </Tree>
      <HScroll>
        <Chevron dir="left" />
        <div className="thumb" />
        <span className="end"><Chevron dir="right" /></span>
      </HScroll>
    </Panel>
  );
}

function PoolList() {
  return (
    <PoolTable cellSpacing="0">
      <thead>
        <Row $head>
          <th>
            名称
            <Chevron dir="up" weight={1} color="#777" />
          </th>
          <th>状态</th>
          <th>.NET CLR ...</th>
          <th>托管管道模式</th>
          <th>标识</th>
          <th>应用程序</th>
        </Row>
      </thead>
      <tbody>
        {pools.map(([name, mode, apps]) => (
          <Row key={name} $active={name === 'yogaplayAPI'}>
            <td><Pool />{name}</td>
            <td>已启动</td>
            <td>v4.0</td>
            <td>{mode}</td>
            <td>ApplicationPoolIdentity</td>
            <td>{apps}</td>
          </Row>
        ))}
        <Row $fill aria-hidden="true">
          <td /><td /><td /><td /><td /><td />
        </Row>
      </tbody>
    </PoolTable>
  );
}

function Actions() {
  return (
    <Panel $width={200} $shaded>
      <PanelTitle>操作</PanelTitle>
      <ActionList>
        {actions.map((item, i) => {
          if (!item) return <ActionRule key={i} />;
          const { label, Glyph, head, off } = item;
          return (
            <ActionItem key={label}>
              <span className="icon">{Glyph && <Glyph />}</span>
              {head && <h3>{label}</h3>}
              {off && <button disabled>{label}</button>}
              {!head && !off && <a href="#">{label}</a>}
            </ActionItem>
          );
        })}
      </ActionList>
    </Panel>
  );
}

function ManagerWindow() {
  return (
    <Manager>
      <ManagerTitle>
        <StartPage />
        <h1>Internet Information Services (IIS)管理器</h1>
        <WinButtons>
          <button aria-label="最小化"><WinMin /></button>
          <button aria-label="最大化"><WinMax /></button>
          <button aria-label="关闭"><WinClose /></button>
        </WinButtons>
      </ManagerTitle>
      <NavBand>
        <BackForward>
          <button aria-label="后退"><Arrow color="#6e7c8c" /></button>
          <button aria-label="前进"><Arrow color="#8598ad" flip /></button>
        </BackForward>
        <Breadcrumb>
          <Pool />
          <Crumb />
          <a href="#">172_17_0_14</a>
          <Crumb />
          <a href="#">应用程序池</a>
        </Breadcrumb>
        <NavTools>
          <button aria-label="刷新"><RefreshGreen /></button>
          <button aria-label="停止" disabled><StopGrey /></button>
          <button aria-label="主页"><Home /></button>
          <button className="split" aria-label="帮助"><Help /><Caret /></button>
        </NavTools>
      </NavBand>
      <MenuBar>
        <button>文件(F)</button>
        <button>视图(V)</button>
        <button>帮助(H)</button>
      </MenuBar>
      <Columns>
        <Connections />
        <Center>
          <Feature>
            <FeatureHead>
              <BigServer />
              <h2>应用程序池</h2>
            </FeatureHead>
            <Intro>
              您可以在此页上查看和管理服务器上的应用程序池列表。应用程序池与工作进程相关联，包含一个或多个应用程序，并提供不同应用程序之间的隔离。
            </Intro>
            <ListFrame>
              <FilterBar>
                <label htmlFor="filter">筛选:</label>
                <Combo $width={121}>
                  <input id="filter" />
                  <Caret />
                </Combo>
                <button className="go" disabled><Funnel />开始(G)</button>
                <button className="caret" aria-label="筛选选项" disabled><Caret color="#8a8a8a" /></button>
                <button><ShowAll />全部显示(A)</button>
                <span className="sep" />
                <label htmlFor="group">分组依据:</label>
                <Combo $width={115}>
                  <select id="group"><option>不进行分组</option></select>
                  <Caret />
                </Combo>
              </FilterBar>
              <PoolList />
            </ListFrame>
          </Feature>
          <ViewTabs>
            <ViewTab $active><FeatureView />功能视图</ViewTab>
            <ViewTab><ContentView />内容视图</ViewTab>
          </ViewTabs>
        </Center>
        <Actions />
      </Columns>
      <StatusBar>
        就绪
        <div className="right">
          <Server />
          <svg width="10" height="10" viewBox="0 0 10 10" aria-hidden="true">
            <path d="M8 0h2v2H8zM4 4h2v2H4zM8 4h2v2H8zM0 8h2v2H0zM4 8h2v2H4zM8 8h2v2H8z" fill="#a0a0a0" />
          </svg>
        </div>
      </StatusBar>
    </Manager>
  );
}

/* ---------- context menu ---------- */

const ContextMenu = styled.div`
  position: absolute;
  left: 653px;
  top: 375px;
  width: 218px;
  padding: 1px;
  border: 1px solid #979797;
  background: linear-gradient(90deg, #f1f1f1 24px, #fcfcfc 24px);
`;

const MenuItem = styled.button`
  display: flex;
  align-items: center;
  width: 100%;
  height: 22px;
  padding-left: 3px;
  text-align: left;
  &:disabled {
    color: #838383;
  }
  .icon {
    width: 31px;
  }
`;

const MenuRule = styled.hr`
  height: 1px;
  margin: 3px 0 2px 31px;
  border: 0;
  background: #bdbdaf;
`;

const Highlight = styled.div`
  position: absolute;
  left: 15px;
  top: 25px;
  width: 180px;
  height: 25px;
  border: 1px solid #f0434a;
  pointer-events: none;
`;

function PoolMenu() {
  return (
    <ContextMenu role="menu">
      {menuItems.map((item, i) =>
        item ? (
          <MenuItem key={item.label} role="menuitem" disabled={item.off}>
            <span className="icon">{item.Glyph && <item.Glyph />}</span>
            {item.label}
          </MenuItem>
        ) : (
          <MenuRule key={i} />
        )
      )}
      <Highlight />
    </ContextMenu>
  );
}

export default function App() {
  return (
    <Screen>
      <GlobalStyle />
      <Defs />
      <ExplorerWindow />
      <PermissionsDialog />
      <ManagerWindow />
      <PoolMenu />
    </Screen>
  );
}
